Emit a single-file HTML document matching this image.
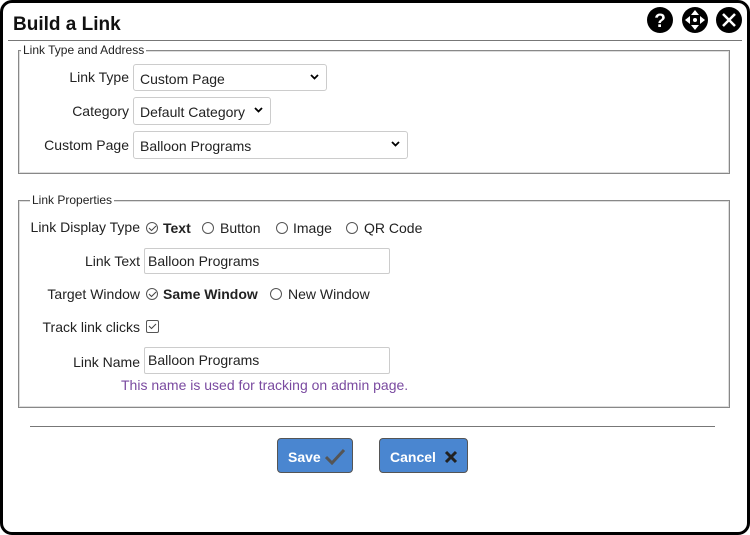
<!DOCTYPE html>
<html><head><style>
*{box-sizing:border-box}
body{margin:0;width:750px;height:535px;background:#fff;font-family:"Liberation Sans",sans-serif;position:relative;overflow:hidden;color:#222}
.frame{position:absolute;left:0;top:0;width:750px;height:535px;border:3px solid #000;border-radius:12px}
.t{position:absolute;white-space:nowrap}
.title{left:13px;top:14px;font-size:19px;font-weight:bold;color:#111}
.hr{position:absolute;height:1px;background:#777}
.fs{position:absolute;border:1px solid #888;box-shadow:inset 0 0 0 1px #ddd}
.leg{position:absolute;background:#fff;font-size:12px;padding:0 2px;color:#222}
.lbl{font-size:14px;text-align:right}
.sel{position:absolute;border:1px solid #ccc;border-radius:3px;background:#fff;font-size:14px;padding:6px 0 0 6px}
.sel svg{position:absolute;right:7px;top:9px}
.inp{position:absolute;border:1px solid #ccc;border-radius:2px;font-size:14px;padding:4px 0 0 3px;background:#fff}
.rad{position:absolute;width:12px;height:12px;border:1px solid #555;border-radius:50%}
.btn{position:absolute;background:#4a86d0;border:1px solid #555;border-radius:4px;color:#fff;font-weight:bold;font-size:14px;padding:10px 0 0 10px}
</style></head><body>
<div class="frame"></div>
<div class="t title">Build a Link</div>
<svg style="position:absolute;left:645px;top:6px" width="100" height="30">
<circle cx="15" cy="14" r="13" fill="#000"/><text x="15" y="21" font-size="19" font-weight="bold" fill="#fff" text-anchor="middle" font-family="Liberation Sans">?</text>
<circle cx="50" cy="14" r="13" fill="#000"/><path d="M50 4l4 5h-8zM50 24l4-5h-8zM40 14l5-4v8zM60 14l-5-4v8z" fill="#fff"/><circle cx="50" cy="14" r="2" fill="#fff"/>
<circle cx="84" cy="14" r="13" fill="#000"/><path d="M78 8l12 12M90 8l-12 12" stroke="#fff" stroke-width="2.5"/>
</svg>
<div class="hr" style="left:8px;top:40px;width:734px"></div>
<div class="fs" style="left:18px;top:50px;width:712px;height:124px"></div>
<div class="leg" style="left:21px;top:43px">Link Type and Address</div>
<div class="t lbl" style="right:621px;top:69px">Link Type</div>
<div class="sel" style="left:133px;top:64px;width:194px;height:27px">Custom Page<svg width="9" height="6"><path d="M1 1l3.5 3.5L8 1" stroke="#000" stroke-width="1.8" fill="none"/></svg></div>
<div class="t lbl" style="right:621px;top:103px">Category</div>
<div class="sel" style="left:133px;top:97px;width:138px;height:28px">Default Category<svg width="9" height="6"><path d="M1 1l3.5 3.5L8 1" stroke="#000" stroke-width="1.8" fill="none"/></svg></div>
<div class="t lbl" style="right:621px;top:137px">Custom Page</div>
<div class="sel" style="left:133px;top:131px;width:275px;height:28px">Balloon Programs<svg width="9" height="6"><path d="M1 1l3.5 3.5L8 1" stroke="#000" stroke-width="1.8" fill="none"/></svg></div>

<div class="fs" style="left:18px;top:200px;width:712px;height:208px"></div>
<div class="leg" style="left:30px;top:193px">Link Properties</div>
<div class="t lbl" style="right:610px;top:219px">Link Display Type</div>
<div class="rad" style="left:146px;top:222px"></div><svg style="position:absolute;left:148px;top:225px" width="9" height="7"><path d="M1 3l2.5 2.5L8 1" stroke="#444" fill="none"/></svg>
<div class="t" style="left:163px;top:220px;font-size:14px;font-weight:bold">Text</div>
<div class="rad" style="left:202px;top:222px"></div><div class="t" style="left:220px;top:220px;font-size:14px">Button</div>
<div class="rad" style="left:276px;top:222px"></div><div class="t" style="left:293px;top:220px;font-size:14px">Image</div>
<div class="rad" style="left:346px;top:222px"></div><div class="t" style="left:364px;top:220px;font-size:14px">QR Code</div>
<div class="t lbl" style="right:610px;top:253px">Link Text</div>
<div class="inp" style="left:144px;top:248px;width:246px;height:26px">Balloon Programs</div>
<div class="t lbl" style="right:610px;top:286px">Target Window</div>
<div class="rad" style="left:146px;top:288px"></div><svg style="position:absolute;left:148px;top:291px" width="9" height="7"><path d="M1 3l2.5 2.5L8 1" stroke="#444" fill="none"/></svg>
<div class="t" style="left:163px;top:286px;font-size:14px;font-weight:bold">Same Window</div>
<div class="rad" style="left:270px;top:288px"></div><div class="t" style="left:288px;top:286px;font-size:14px">New Window</div>
<div class="t lbl" style="right:610px;top:319px">Track link clicks</div>
<div style="position:absolute;left:146px;top:320px;width:13px;height:13px;border:1px solid #555;border-radius:2px"></div><svg style="position:absolute;left:148px;top:323px" width="9" height="7"><path d="M1 3l2.5 2.5L8 1" stroke="#444" fill="none"/></svg>
<div class="t lbl" style="right:610px;top:354px">Link Name</div>
<div class="inp" style="left:144px;top:347px;width:246px;height:27px">Balloon Programs</div>
<div class="t" style="left:121px;top:377px;font-size:14px;color:#7a4aa0">This name is used for tracking on admin page.</div>

<div class="hr" style="left:30px;top:426px;width:685px"></div>
<div class="btn" style="left:277px;top:438px;width:76px;height:35px">Save<svg style="position:absolute;left:47px;top:10px" width="20" height="16"><path d="M1 8l6 6L19 1" stroke="#555" stroke-width="3" fill="none"/></svg></div>
<div class="btn" style="left:379px;top:438px;width:89px;height:35px">Cancel<svg style="position:absolute;left:64px;top:11px" width="14" height="14"><path d="M2 2l10 10M12 2L2 12" stroke="#222" stroke-width="3"/></svg></div>
</body></html>
